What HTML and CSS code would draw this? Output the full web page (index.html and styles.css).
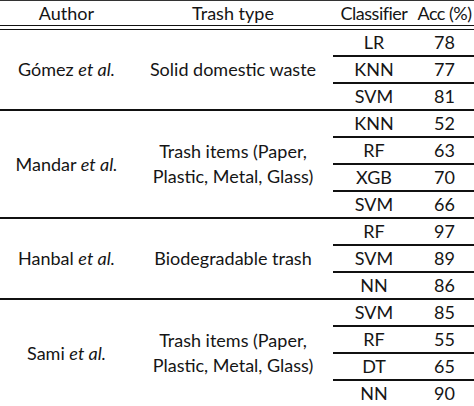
FILE: index.html
```html
<!DOCTYPE html>
<html>
<head>
<meta charset="utf-8">
<link rel="stylesheet" href="styles.css">
</head>
<body>
<div class="table">
  <div class="head">
    <div class="c author">Author</div>
    <div class="c trash">Trash type</div>
    <div class="c clf tight">Classifier</div>
    <div class="c acc tight">Acc (%)</div>
  </div>
  <div class="body">
    <div class="group">
      <div class="c author span3"><span>Gómez <i>et al.</i></span></div>
      <div class="c trash span3">Solid domestic waste</div>
      <div class="c clf">LR</div><div class="c acc">78</div>
      <div class="c clf sep">KNN</div><div class="c acc sep">77</div>
      <div class="c clf sep">SVM</div><div class="c acc sep">81</div>
    </div>
    <div class="group">
      <div class="c author span4"><span>Mandar <i>et al.</i></span></div>
      <div class="c trash span4"><span>Trash items (Paper,<br>Plastic, Metal, Glass)</span></div>
      <div class="c clf">KNN</div><div class="c acc">52</div>
      <div class="c clf sep">RF</div><div class="c acc sep">63</div>
      <div class="c clf sep">XGB</div><div class="c acc sep">70</div>
      <div class="c clf sep">SVM</div><div class="c acc sep">66</div>
    </div>
    <div class="group">
      <div class="c author span3"><span>Hanbal <i>et al.</i></span></div>
      <div class="c trash span3">Biodegradable trash</div>
      <div class="c clf">RF</div><div class="c acc">97</div>
      <div class="c clf sep">SVM</div><div class="c acc sep">89</div>
      <div class="c clf sep">NN</div><div class="c acc sep">86</div>
    </div>
    <div class="group">
      <div class="c author span4"><span>Sami <i>et al.</i></span></div>
      <div class="c trash span4"><span>Trash items (Paper,<br>Plastic, Metal, Glass)</span></div>
      <div class="c clf">SVM</div><div class="c acc">85</div>
      <div class="c clf sep">RF</div><div class="c acc sep">55</div>
      <div class="c clf sep">DT</div><div class="c acc sep">65</div>
      <div class="c clf sep">NN</div><div class="c acc sep">90</div>
    </div>
  </div>
</div>
</body>
</html>
```

FILE: styles.css
```css
html, body {
  margin: 0;
  padding: 0;
  background: #fff;
}
.table {
  width: 474px;
  height: 406px;
  overflow: hidden;
  font-family: Lato, "Liberation Sans", sans-serif;
  font-size: 18px;
  color: #151515;
  border-top: 1px solid #333;
  box-sizing: border-box;
}
.head {
  display: grid;
  grid-template-columns: 133px 200px 82px 59px;
  height: 25px;
  box-sizing: border-box;
  border-bottom: 1px solid #111;
}
.body {
  margin-top: 3px;
  border-top: 1px solid #111;
}
.group {
  display: grid;
  grid-template-columns: 133px 200px 82px 59px;
}
.group + .group {
  border-top: 2px solid #111;
}
.c {
  display: flex;
  align-items: center;
  justify-content: center;
  text-align: center;
  height: 25px;
  line-height: 25px;
  white-space: nowrap;
  box-sizing: border-box;
}
.head .c {
  height: 24px;
}
.head .tight {
  letter-spacing: -0.5px;
}
.author { grid-column: 1; }
.trash { grid-column: 2; }
.clf { grid-column: 3; }
.acc { grid-column: 4; }
.span3, .span4 {
  height: auto;
}
.span3 { grid-row: 1 / span 3; }
.span4 { grid-row: 1 / span 4; }
.sep {
  height: 27px;
  border-top: 2px solid #111;
}
```
